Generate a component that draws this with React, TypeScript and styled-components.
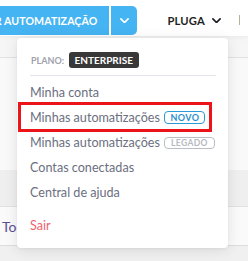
import React from "react";
import styled, { createGlobalStyle, css } from "styled-components";

const GlobalStyle = createGlobalStyle`
  html, body { margin: 0; padding: 0; }
  body {
    font-family: Lato, "Open Sans", "Liberation Sans", sans-serif;
    background: #f0f0f0;
    width: 248px;
    height: 261px;
    overflow: hidden;
  }
`;

const Page = styled.div`
  position: relative;
  width: 248px;
  height: 261px;
  overflow: hidden;
  display: flex;
  flex-direction: column;
`;

const Header = styled.header`
  height: 36px;
  flex: none;
  background: #ffffff;
  display: flex;
  justify-content: flex-end;
  align-items: flex-start;
  padding-top: 6px;
  box-sizing: border-box;
  overflow: hidden;
  position: relative;
  z-index: 1;
  box-shadow: 0 1px 6px rgba(0, 0, 0, 0.06);
`;

const SplitButton = styled.div`
  display: flex;
  gap: 2px;
  flex: none;
  margin-right: 30px;
`;

const BlueButton = styled.button<{ $square?: boolean }>`
  height: 29px;
  border: none;
  background: #45b4f2;
  color: #ffffff;
  font-family: Lato, "Liberation Sans", sans-serif;
  font-weight: 700;
  font-size: 10.6px;
  letter-spacing: 0.1px;
  white-space: nowrap;
  display: flex;
  align-items: center;
  justify-content: center;
  padding: ${(p) => (p.$square ? "0" : "0 12px 0 16px")};
  width: ${(p) => (p.$square ? "26px" : "auto")};
  border-radius: ${(p) => (p.$square ? "0 5px 5px 0" : "5px 0 0 5px")};
`;

const AccountMenu = styled.div`
  height: 29px;
  display: flex;
  align-items: center;
  gap: 7px;
  font-weight: 700;
  font-size: 11.2px;
  letter-spacing: 0.2px;
  color: #1f1f24;
  margin-right: 18px;
  flex: none;
`;

const HeaderDivider = styled.span`
  width: 1px;
  height: 10px;
  margin-top: 9px;
  margin-right: 8px;
  background: #b4b29a;
  flex: none;
`;

const Content = styled.main`
  flex: 1;
  display: flex;
  flex-direction: column;
`;

const Band = styled.div<{ $h: number; $bg: string; $line?: boolean }>`
  height: ${(p) => p.$h}px;
  flex: none;
  background: ${(p) => p.$bg};
  ${(p) =>
    p.$line &&
    css`
      border-bottom: 1px solid #e2e2e4;
    `}
  box-sizing: border-box;
`;

const TableRow = styled.div`
  height: 39px;
  flex: none;
  background: #fafafa;
  border-bottom: 1px solid #dcdcde;
  display: flex;
  align-items: center;
  padding-left: 2px;
  font-size: 14px;
  color: #5e4f92;
  box-sizing: border-box;
`;

const Dropdown = styled.div`
  position: absolute;
  top: 38px;
  left: 17px;
  width: 211px;
  height: 210px;
  background: #ffffff;
  border-radius: 4px;
  box-shadow: 0 2px 14px rgba(0, 0, 0, 0.1), 0 1px 3px rgba(0, 0, 0, 0.05);
  z-index: 2;
  box-sizing: border-box;
  padding-top: 14px;
  display: flex;
  flex-direction: column;
`;

const PlanRow = styled.div`
  display: flex;
  align-items: center;
  gap: 5px;
  padding: 0 13px 0 14px;
  height: 16px;
`;

const PlanLabel = styled.span`
  font-size: 9px;
  font-weight: 700;
  color: #a0a2ac;
`;

const PlanBadge = styled.span`
  background: #383838;
  color: #ffffff;
  font-size: 10px;
  font-weight: 700;
  height: 16px;
  padding: 0 5.5px;
  border-radius: 3px;
  display: flex;
  align-items: center;
`;

const MenuDivider = styled.div`
  height: 1px;
  background: #e5e3ec;
  margin: 7px 12px 4px 13px;
`;

const MenuItem = styled.div<{ $danger?: boolean; $highlight?: boolean; $gapTop?: number }>`
  position: relative;
  height: 25px;
  display: flex;
  align-items: center;
  padding: 0 13px;
  font-size: 12.6px;
  color: ${(p) => (p.$danger ? "#f2636f" : "#6b6f7f")};
  margin-top: ${(p) => p.$gapTop ?? 0}px;
  white-space: nowrap;
  ${(p) =>
    p.$highlight &&
    css`
      &::after {
        content: "";
        position: absolute;
        left: 1px;
        right: 16px;
        top: -3px;
        bottom: -2px;
        border: 3px solid #ea1419;
      }
    `}
`;

const Tag = styled.span<{ $variant: "new" | "legacy" }>`
  margin-left: 4px;
  display: inline-flex;
  align-items: center;
  font-weight: 700;
  letter-spacing: 0.4px;
  border-radius: 4px;
  padding: 0 5px 0 5.5px;
  box-sizing: border-box;
  ${(p) =>
    p.$variant === "new"
      ? css`
          font-size: 9px;
          height: 13px;
          border: 1.5px solid #2b9ad6;
          color: #2b8fd0;
        `
      : css`
          font-size: 8.5px;
          height: 12px;
          padding: 0 6px;
          border: 1px solid #b9bdc6;
          color: #b5b9c2;
        `}
`;

const Chevron = ({ color, size = 9 }: { color: string; size?: number }) => (
  <svg width={size} height={size * 0.6} viewBox="0 0 10 6" fill="none">
    <polyline
      points="1,1 5,5 9,1"
      stroke={color}
      strokeWidth="1.9"
      strokeLinecap="round"
      strokeLinejoin="round"
    />
  </svg>
);

export default function App() {
  return (
    <>
      <GlobalStyle />
      <Page>
        <Header>
          <SplitButton>
            <BlueButton>CRIAR AUTOMATIZAÇÃO</BlueButton>
            <BlueButton $square>
              <Chevron color="#ffffff" size={9} />
            </BlueButton>
          </SplitButton>
          <AccountMenu>
            PLUGA
            <Chevron color="#1f1f24" size={9} />
          </AccountMenu>
          <HeaderDivider />
        </Header>
        <Content>
          <Band $h={22} $bg="#f6f6f7" $line />
          <Band $h={112} $bg="#f9f9f9" />
          <Band $h={37} $bg="#efeff0" $line />
          <TableRow>Todas</TableRow>
          <Band $h={15} $bg="#f0f0f1" />
        </Content>
        <Dropdown>
          <PlanRow>
            <PlanLabel>PLANO:</PlanLabel>
            <PlanBadge>ENTERPRISE</PlanBadge>
          </PlanRow>
          <MenuDivider />
          <MenuItem>Minha conta</MenuItem>
          <MenuItem $highlight>
            Minhas automatizações<Tag $variant="new">NOVO</Tag>
          </MenuItem>
          <MenuItem>
            Minhas automatizações<Tag $variant="legacy">LEGADO</Tag>
          </MenuItem>
          <MenuItem>Contas conectadas</MenuItem>
          <MenuItem>Central de ajuda</MenuItem>
          <MenuItem $danger $gapTop={8}>
            Sair
          </MenuItem>
        </Dropdown>
      </Page>
    </>
  );
}
